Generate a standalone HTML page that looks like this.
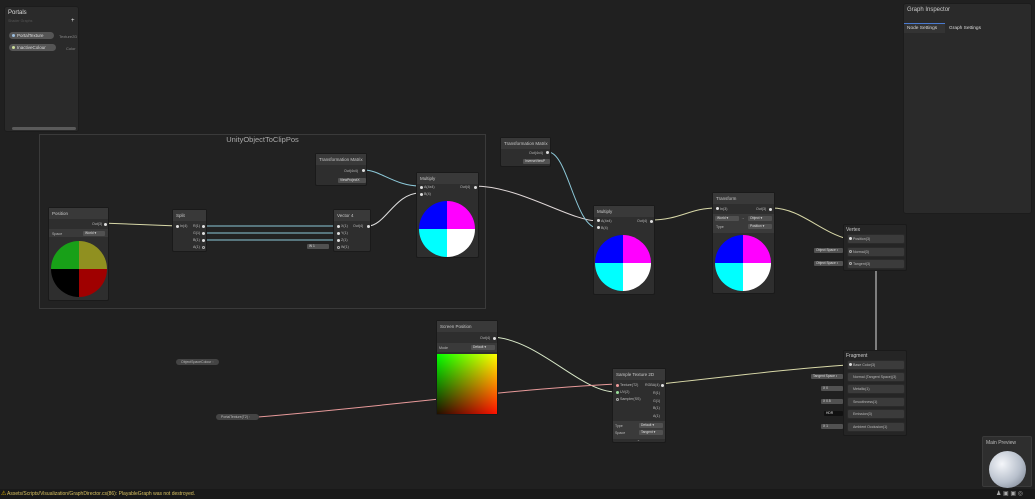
<!DOCTYPE html>
<html><head><meta charset="utf-8">
<style>
*{margin:0;padding:0;box-sizing:border-box}
body{width:1035px;height:499px;background:#202020;font-family:"Liberation Sans",sans-serif;color:#c4c4c4;position:relative;overflow:hidden;font-size:4px}
.a{position:absolute}
.node{position:absolute;background:#2e2e2e;border:1px solid #1a1a1a;border-radius:2px}
.hd{background:#393939;height:11px;font-size:4.5px;padding:3px 3px;color:#c8c8c8;white-space:nowrap;overflow:hidden}
.t{position:absolute;font-size:3.6px;color:#bbb;white-space:nowrap}
.dd{position:absolute;background:#515151;border-radius:1px;height:5px;font-size:3.3px;color:#ddd;padding:0 2px;line-height:5px;white-space:nowrap;overflow:hidden}
.port{position:absolute;width:3px;height:3px;border-radius:50%;background:#ddd}
.blk{position:absolute;background:#3b3b3b;border:1px solid #2a2a2a;height:10px;border-radius:2px}
</style></head><body>

<svg class="a" style="left:0;top:0" width="1035" height="499">
<rect x="39.5" y="134.5" width="446" height="174" fill="#222" stroke="#3a3a3a"/>
<g fill="none" stroke-width="1">
<path d="M101 223 L178 226" stroke="#d8d8a8"/>
<path d="M199 226 L339 226 M199 233 L339 233 M199 240 L339 240" stroke="#8cc8d8"/>
<path d="M364 170 C380 170 395 186 420 186" stroke="#8cc8d8"/>
<path d="M368 226 C385 226 395 193 420 193" stroke="#e0e0e0"/>
<path d="M474 186 C520 186 570 221 598 221" stroke="#e0d8d8"/>
<path d="M548 152 C568 152 575 228 598 228" stroke="#8cc8d8"/>
<path d="M651 220 C680 220 690 208 716 208" stroke="#d8d8a8"/>
<path d="M772 208 C800 208 820 232 848 239" stroke="#d8d8a8"/>
<path d="M876 270 L876 350" stroke="#ddd"/>
<path d="M493 337 C540 340 580 392 616 392" stroke="#d8e8c8"/>
<path d="M258 417 C400 405 500 390 616 384" stroke="#e89a9a"/>
<path d="M661 384 C740 375 800 368 848 365" stroke="#d8d8a8"/>
</g>
</svg>

<!-- Portals -->
<div class="a" style="left:4px;top:6px;width:75px;height:126px;background:#2a2a2a;border:1px solid #1c1c1c;border-radius:3px">
<div class="a" style="left:3px;top:3px;font-size:6px;color:#ddd">Portals</div>
<div class="a" style="left:3px;top:12px;font-size:3.6px;color:#555">Shader Graphs</div>
<div class="a" style="left:66px;top:11px;font-size:6px;color:#eee">+</div>
<div class="a" style="left:4px;top:25px;width:45px;height:7px;background:#555;border-radius:4px;font-size:4.5px;line-height:7px;padding-left:8px;color:#ddd">PortalTexture</div>
<div class="a" style="left:7px;top:27px;width:3px;height:3px;border-radius:50%;background:#9bd"></div>
<div class="a" style="left:54px;top:27px;font-size:4px;color:#888">Texture2D</div>
<div class="a" style="left:4px;top:37px;width:47px;height:7px;background:#555;border-radius:4px;font-size:4.5px;line-height:7px;padding-left:8px;color:#ddd">InactiveColour</div>
<div class="a" style="left:7px;top:39px;width:3px;height:3px;border-radius:50%;background:#cd9"></div>
<div class="a" style="left:61px;top:39px;font-size:4px;color:#888">Color</div>
<div class="a" style="left:7px;top:120px;width:64px;height:3px;background:#5a5a5a;border-radius:2px"></div>
</div>

<div class="a" style="left:0;top:135px;width:525px;text-align:center;font-size:7.5px;color:#aaa">UnityObjectToClipPos</div>

<div class="node" style="left:315px;top:153px;width:52px;height:33px">
<div class="hd">Transformation Matrix</div>
<div class="t" style="left:28px;top:15px">Out(4x4)</div><div class="port" style="left:46px;top:15px"></div>
<div class="dd" style="left:22px;top:24px;width:28px">ViewProjectX</div>
</div>
<div class="node" style="left:48px;top:207px;width:61px;height:94px">
<div class="hd">Position</div>
<div class="t" style="left:43px;top:14px">Out(3)</div><div class="port" style="left:55px;top:15px"></div>
<div class="a" style="left:0;top:21px;width:59px;height:8px;background:#3a3a3a"></div>
<div class="t" style="left:3px;top:24px">Space</div><div class="dd" style="left:34px;top:23px;width:22px">World ▾</div>
</div>
<div class="node" style="left:172px;top:209px;width:35px;height:43px">
<div class="hd">Split</div>
<div class="port" style="left:3px;top:15px"></div><div class="t" style="left:7px;top:14px">In(4)</div>
<div class="t" style="left:20px;top:14px">R(1)</div><div class="port" style="left:29px;top:15px"></div>
<div class="t" style="left:20px;top:21px">G(1)</div><div class="port" style="left:29px;top:22px"></div>
<div class="t" style="left:20px;top:28px">B(1)</div><div class="port" style="left:29px;top:29px"></div>
<div class="t" style="left:20px;top:35px">A(1)</div><div class="port" style="left:29px;top:36px;background:none;border:0.7px solid #aaa"></div>
</div>
<div class="node" style="left:333px;top:209px;width:38px;height:43px">
<div class="hd">Vector 4</div>
<div class="port" style="left:3px;top:15px"></div><div class="t" style="left:7px;top:14px">X(1)</div>
<div class="port" style="left:3px;top:22px"></div><div class="t" style="left:7px;top:21px">Y(1)</div>
<div class="port" style="left:3px;top:29px"></div><div class="t" style="left:7px;top:28px">Z(1)</div>
<div class="port" style="left:3px;top:36px;background:none;border:0.7px solid #aaa"></div><div class="t" style="left:7px;top:35px">W(1)</div>
<div class="t" style="left:19px;top:14px">Out(4)</div><div class="port" style="left:33px;top:15px"></div>
</div>
<div class="dd" style="left:307px;top:244px;width:22px">W 1</div>
<div class="node" style="left:416px;top:172px;width:63px;height:86px">
<div class="hd">Multiply</div>
<div class="port" style="left:3px;top:13px"></div><div class="t" style="left:7px;top:12px">A(4x4)</div>
<div class="port" style="left:3px;top:20px"></div><div class="t" style="left:7px;top:19px">B(4)</div>
<div class="t" style="left:43px;top:12px">Out(4)</div><div class="port" style="left:57px;top:13px"></div>
</div>
<div class="node" style="left:500px;top:137px;width:51px;height:30px">
<div class="hd">Transformation Matrix</div>
<div class="t" style="left:28px;top:13px">Out(4x4)</div><div class="port" style="left:45px;top:13px"></div>
<div class="dd" style="left:22px;top:21px;width:27px">InverseViewP</div>
</div>
<div class="node" style="left:593px;top:205px;width:62px;height:90px">
<div class="hd">Multiply</div>
<div class="port" style="left:3px;top:13px"></div><div class="t" style="left:7px;top:13px">A(4x4)</div>
<div class="port" style="left:3px;top:20px"></div><div class="t" style="left:7px;top:20px">B(4)</div>
<div class="t" style="left:43px;top:13px">Out(4)</div><div class="port" style="left:56px;top:14px"></div>
</div>
<div class="node" style="left:712px;top:192px;width:63px;height:102px">
<div class="hd">Transform</div>
<div class="port" style="left:3px;top:14px"></div><div class="t" style="left:7px;top:14px">In(3)</div>
<div class="t" style="left:43px;top:14px">Out(3)</div><div class="port" style="left:56px;top:15px"></div>
<div class="a" style="left:0;top:21px;width:61px;height:19px;background:#3a3a3a"></div>
<div class="dd" style="left:2px;top:23px;width:24px">World ▾</div><div class="t" style="left:28px;top:23px">→</div>
<div class="dd" style="left:35px;top:23px;width:24px">Object ▾</div>
<div class="t" style="left:3px;top:32px">Type</div><div class="dd" style="left:35px;top:31px;width:24px">Position ▾</div>
</div>
<svg class="a" style="left:0;top:0;pointer-events:none" width="1035" height="499">
<defs>
<clipPath id="c2"><circle r="28"/></clipPath>
<g id="cm"><g clip-path="url(#c2)">
<rect x="-28" y="-28" width="28" height="28" fill="#0000ff"/>
<rect x="0" y="-28" width="28" height="28" fill="#ff00ff"/>
<rect x="-28" y="0" width="28" height="28" fill="#00ffff"/>
<rect x="0" y="0" width="28" height="28" fill="#ffffff"/>
</g></g>
</defs>
<g transform="translate(79,269)"><g clip-path="url(#c2)">
<rect x="-28" y="-28" width="28" height="28" fill="#18a018"/>
<rect x="0" y="-28" width="28" height="28" fill="#909020"/>
<rect x="-28" y="0" width="28" height="28" fill="#000"/>
<rect x="0" y="0" width="28" height="28" fill="#a00000"/>
</g></g>
<use href="#cm" x="447" y="229"/><use href="#cm" x="623" y="263"/><use href="#cm" x="743" y="263"/>
</svg>

<div class="node" style="left:843px;top:224px;width:64px;height:47px;background:#252525">
<div class="a" style="left:2px;top:2px;font-size:5px;color:#ccc">Vertex</div>
</div>
<div class="blk" style="left:847px;top:234px;width:58px"></div><div class="port" style="left:849px;top:237px"></div><div class="t" style="left:853px;top:237px">Position(3)</div>
<div class="blk" style="left:847px;top:247px;width:58px"></div><div class="port" style="left:849px;top:250px;background:none;border:0.7px solid #aaa"></div><div class="t" style="left:853px;top:250px">Normal(3)</div>
<div class="blk" style="left:847px;top:259px;width:58px"></div><div class="port" style="left:849px;top:262px;background:none;border:0.7px solid #aaa"></div><div class="t" style="left:853px;top:262px">Tangent(3)</div>
<div class="dd" style="left:814px;top:248px;width:29px">Object Space •</div>
<div class="dd" style="left:814px;top:261px;width:29px">Object Space •</div>

<div class="node" style="left:843px;top:350px;width:64px;height:86px;background:#252525">
<div class="a" style="left:2px;top:2px;font-size:5px;color:#ccc">Fragment</div>
</div>
<div class="blk" style="left:847px;top:360px;width:58px"></div><div class="port" style="left:849px;top:363px"></div><div class="t" style="left:853px;top:363px">Base Color(3)</div>
<div class="blk" style="left:847px;top:372px;width:58px"></div><div class="t" style="left:853px;top:375px">Normal (Tangent Space)(3)</div>
<div class="blk" style="left:847px;top:384px;width:58px"></div><div class="t" style="left:853px;top:387px">Metallic(1)</div>
<div class="blk" style="left:847px;top:397px;width:58px"></div><div class="t" style="left:853px;top:400px">Smoothness(1)</div>
<div class="blk" style="left:847px;top:409px;width:58px"></div><div class="t" style="left:853px;top:412px">Emission(3)</div>
<div class="blk" style="left:847px;top:422px;width:58px"></div><div class="t" style="left:853px;top:425px">Ambient Occlusion(1)</div>
<div class="dd" style="left:811px;top:374px;width:32px">Tangent Space •</div>
<div class="dd" style="left:821px;top:386px;width:22px">X 0</div>
<div class="dd" style="left:821px;top:399px;width:22px">X 0.5</div>
<div class="dd" style="left:824px;top:411px;width:19px;background:#111">HDR</div>
<div class="dd" style="left:821px;top:424px;width:22px">X 1</div>

<div class="node" style="left:436px;top:320px;width:62px;height:95px">
<div class="hd">Screen Position</div>
<div class="t" style="left:43px;top:15px">Out(4)</div><div class="port" style="left:56px;top:16px"></div>
<div class="a" style="left:0;top:22px;width:60px;height:9px;background:#3a3a3a"></div>
<div class="t" style="left:2px;top:25px">Mode</div><div class="dd" style="left:34px;top:24px;width:24px">Default ▾</div>
<div class="a" style="left:0;top:33px;width:60px;height:60px;background-image:linear-gradient(to right,#000,#ff0000),linear-gradient(to bottom,#00ff00,#201000);background-blend-mode:screen"></div>
</div>

<div class="node" style="left:612px;top:368px;width:54px;height:75px">
<div class="hd">Sample Texture 2D</div>
<div class="port" style="left:3px;top:15px;background:#e99"></div><div class="t" style="left:7px;top:14px">Texture(T2)</div>
<div class="port" style="left:3px;top:22px;background:#9d9"></div><div class="t" style="left:7px;top:21px">UV(2)</div>
<div class="port" style="left:3px;top:29px;background:none;border:0.7px solid #aaa"></div><div class="t" style="left:7px;top:28px">Sampler(SS)</div>
<div class="t" style="left:32px;top:14px">RGBA(4)</div><div class="port" style="left:48px;top:15px"></div>
<div class="t" style="left:40px;top:22px">R(1)</div><div class="t" style="left:40px;top:30px">G(1)</div><div class="t" style="left:40px;top:37px">B(1)</div><div class="t" style="left:40px;top:45px">A(1)</div>
<div class="a" style="left:0;top:52px;width:52px;height:18px;background:#3a3a3a"></div>
<div class="t" style="left:2px;top:55px">Type</div><div class="dd" style="left:26px;top:54px;width:24px">Default ▾</div>
<div class="t" style="left:2px;top:62px">Space</div><div class="dd" style="left:26px;top:61px;width:24px">Tangent ▾</div>
<div class="t" style="left:24px;top:69px">⌄</div>
</div>

<div class="a" style="left:176px;top:359px;width:43px;height:6px;background:#444;border-radius:3px;font-size:3.5px;line-height:6px;padding-left:5px;color:#bbb;white-space:nowrap">ObjectSpaceColour ◦</div>
<div class="a" style="left:216px;top:414px;width:43px;height:6px;background:#444;border-radius:3px;font-size:3.5px;line-height:6px;padding-left:5px;color:#bbb;white-space:nowrap">PortalTexture(T2) ◦</div>

<div class="a" style="left:903px;top:3px;width:129px;height:211px;background:#2a2a2a;border:1px solid #1c1c1c;border-radius:3px">
<div class="a" style="left:3px;top:3px;font-size:6px;color:#ccc">Graph Inspector</div>
<div class="a" style="left:0;top:19px;width:41px;height:10px;border-top:1px solid #4a7ad0;background:#333;font-size:4.8px;padding:2px 3px;color:#ddd;white-space:nowrap">Node Settings</div>
<div class="a" style="left:44px;top:20px;font-size:4.8px;padding:2px 1px;color:#ddd;white-space:nowrap">Graph Settings</div>
</div>

<div class="a" style="left:982px;top:436px;width:50px;height:51px;background:#2e2e2e;border:1px solid #3a3a3a;border-radius:2px">
<div class="a" style="left:3px;top:3px;font-size:5px;color:#bbb">Main Preview</div>
<div class="a" style="left:6px;top:14px;width:37px;height:37px;border-radius:50%;background:radial-gradient(circle at 35% 35%,#f4f6fa,#b8c0cc 55%,#6e7684)"></div>
</div>

<div class="a" style="left:0;top:489px;width:1035px;height:10px;background:#191919"></div>
<div class="a" style="left:1px;top:490px;font-size:6px;color:#e6b800">⚠</div>
<div class="a" style="left:7px;top:491px;font-size:5px;color:#d8c060">Assets/Scripts/Visualization/GraphDirector.cs(86): PlayableGraph was not destroyed.</div>
<div class="a" style="left:996px;top:490px;font-size:6px;color:#aaa">♟ ▣ ▣ ◎</div>
</body></html>
